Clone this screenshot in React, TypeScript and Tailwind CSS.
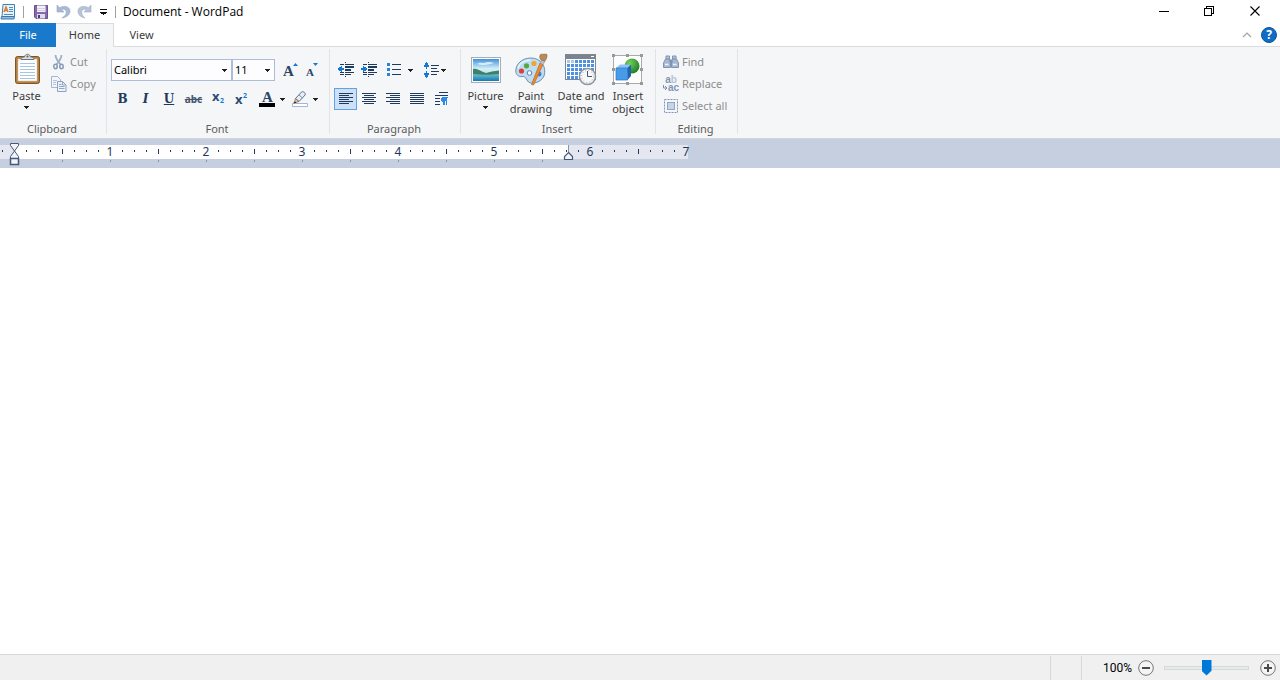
import React from 'react';

const Caret = () => (
  <svg width="5" height="3" viewBox="0 0 5 3" shapeRendering="crispEdges" className="shrink-0" aria-hidden="true">
    <path d="M0 0h5v1H0zM1 1h3v1H1zM2 2h1v1H2z" fill="#222" />
  </svg>
);

type IconProps = { children: React.ReactNode; size?: number; crisp?: boolean };

const Icon = ({ children, size = 16, crisp }: IconProps) => (
  <svg
    width={size}
    height={size}
    viewBox={`0 0 ${size} ${size}`}
    shapeRendering={crisp ? 'crispEdges' : 'auto'}
    className="shrink-0 overflow-visible"
    aria-hidden="true"
  >
    {children}
  </svg>
);

// rows of [x, y, width], one pixel thick
const Lines = ({ rows, fill = '#1f3a5f' }: { rows: number[][]; fill?: string }) => (
  <>
    {rows.map(([x, y, w]) => (
      <rect key={`${x}-${y}`} x={x} y={y} width={w} height="1" fill={fill} />
    ))}
  </>
);

const WordPadIcon = () => (
  <Icon>
    <path d="M3 .5h11.500v12H2z" fill="#e8f3fc" stroke="#3b82b8" />
    <path d="M1.500 12.500h13l-.6 2.500H1z" fill="#8fbfe4" stroke="#3b78aa" />
    <path d="M4 8 6 3l2 5M4.800 6.500h2.400" fill="none" stroke="#e07b28" strokeWidth="1.500" />
    <path d="M9 3.500h4M9 5.500h4M9 7.500h4M4 10.500h9" stroke="#4a90c8" />
  </Icon>
);

const SaveIcon = () => (
  <Icon>
    <path d="M1.500 1.500h13v13H3l-1.500-1.500z" fill="#8768b0" stroke="#67508e" />
    <path d="M4 1.500h8.500V8H4z" fill="#f3f2f8" />
    <path d="M4 4.500h8.500M4 6.500h8.500" stroke="#d3d0e2" />
    <path d="M4 10h8v4.500H4z" fill="#dedce8" />
    <path d="M5 11h2v3H5z" fill="#4d3d6e" />
  </Icon>
);

const UndoIcon = () => (
  <Icon>
    <path d="M2 1v7h7L6.600 5.600C9 4.600 11.300 5.500 11.300 8c0 2.500-1.500 4-4.300 6 5-.8 8-3.200 8-7 0-4.500-6-6-10.500-3.200z" fill="#a9b9d3" stroke="#93a5c3" strokeWidth=".6" />
  </Icon>
);

const RedoIcon = () => (
  <Icon>
    <path d="M14 1v7H7l2.400-2.400C7 4.600 4.700 5.500 4.700 8c0 2.500 1 4 3.300 6-4.500-.8-7-3.200-7-7 0-4.500 6-6 10.500-3.200z" fill="#b7c3d6" stroke="#9fadc5" strokeWidth=".6" />
  </Icon>
);

const PasteIcon = () => (
  <Icon size={32}>
    <rect x="4.500" y="3.500" width="24" height="27" rx="2" fill="#b5803f" stroke="#80551f" />
    <path d="M7 6h19v22H7z" fill="#fbfdff" stroke="#d7cbb8" strokeWidth=".6" />
    <path d="M9 10.500h15M9 13.500h15M9 16.500h15M9 19.500h15M9 22.500h15M9 25.500h15" stroke="#a9c5dc" />
    <path d="M10 6.500c0-2 1.500-2.500 3.500-2.500C14 2 15 1.300 16.500 1.300S19 2 19.500 4c2 0 3.500.5 3.500 2.500z" fill="#d9dce0" stroke="#6f747b" />
    <circle cx="16.500" cy="3.500" r="1" fill="#5b6067" />
  </Icon>
);

const CutIcon = () => (
  <Icon>
    <path d="M4.500 1c0 3 1.500 5.500 5.500 10M10.500 1c0 3-1.500 5.500-5.500 10" fill="none" stroke="#9fafc6" strokeWidth="1.800" />
    <ellipse cx="4.500" cy="12.500" rx="1.700" ry="2.200" fill="none" stroke="#8599b8" strokeWidth="1.500" />
    <ellipse cx="10.500" cy="12.500" rx="1.700" ry="2.200" fill="none" stroke="#8599b8" strokeWidth="1.500" />
  </Icon>
);

const CopyIcon = () => (
  <Icon>
    <path d="M.5.5h6l3 3v8h-9z" fill="#f2f6fc" stroke="#a5b6cf" />
    <path d="M2 4.500h4M2 6.500h3M2 8.500h3" stroke="#b3c4da" />
    <path d="M6.500 5.500h5l3.500 3.500v6.500H6.500z" fill="#eef3fa" stroke="#8da2c0" />
    <path d="M11.500 5.500V9H15M8 8.500h2.500M8 10.500h5.500M8 12.500h5.500" fill="none" stroke="#93a8c6" />
  </Icon>
);

const GrowFontIcon = () => (
  <Icon>
    <text x="0" y="14" fontFamily="Liberation Serif, serif" fontSize="15" fontWeight="bold" fill="#2b4567">A</text>
    <path d="M10 4 12.500 1 15 4z" fill="#1478d4" />
  </Icon>
);

const ShrinkFontIcon = () => (
  <Icon>
    <text x="1" y="14" fontFamily="Liberation Serif, serif" fontSize="11" fontWeight="bold" fill="#2b4567">A</text>
    <path d="M8 1h5l-2.500 3z" fill="#1478d4" />
  </Icon>
);

const SubscriptIcon = () => (
  <Icon>
    <text x="2" y="10" fontSize="13" fontWeight="bold" fill="#2b4b77">x</text>
    <text x="10" y="12" fontSize="7" fontWeight="bold" fill="#1478d4">2</text>
  </Icon>
);

const SuperscriptIcon = () => (
  <Icon>
    <text x="2" y="13" fontSize="13" fontWeight="bold" fill="#2b4b77">x</text>
    <text x="10" y="7" fontSize="7" fontWeight="bold" fill="#1478d4">2</text>
  </Icon>
);

const FontColorIcon = () => (
  <Icon>
    <text x="3" y="11" fontFamily="Liberation Serif, serif" fontSize="15" fontWeight="bold" fill="#2b4567">A</text>
    <path d="M0 12h16v4H0z" fill="#000" />
  </Icon>
);

const HighlightIcon = () => (
  <Icon>
    <path d="M.5 12.500h15v3H.5z" fill="#fff" stroke="#a3b6d2" />
    <path d="M3.500 7.500 9.500 1c1.500-1 4.500.8 3.600 3L7 10.500z" fill="#e7eefa" stroke="#5c7093" />
    <path d="m7 4 3.500 3" stroke="#8093b3" />
    <path d="M3.500 7.500 7 10.500 2 12z" fill="#e8c98a" stroke="#77643c" strokeWidth=".7" />
    <path d="m1 12.300 2.500-1.800.8 1.300z" fill="#222" />
  </Icon>
);

const textRows = [[7, 0, 1], [2, 2, 4], [7, 2, 9], [7, 4, 9], [7, 5, 9], [7, 7, 6], [7, 8, 6], [2, 10, 4], [7, 10, 9], [2, 12, 4], [7, 12, 6], [7, 14, 1]];

const DecreaseIndentIcon = () => (
  <Icon crisp>
    <Lines rows={textRows} />
    <path d="M0 6h6v2H0zM1 5h3v4H1zM3 4h1v6H3z" fill="#1478d4" />
  </Icon>
);

const IncreaseIndentIcon = () => (
  <Icon crisp>
    <Lines rows={textRows} />
    <path d="M0 6h6v2H0zM2 5h3v4H2zM2 4h1v6H2z" fill="#1478d4" />
  </Icon>
);

const BulletsIcon = () => (
  <Icon crisp>
    <Lines rows={[[6, 2, 9], [6, 7, 9], [6, 12, 9]]} />
    <path d="M1 1h3v3H1zM1 6h3v3H1zM1 11h3v3H1z" fill="#2a82da" />
  </Icon>
);

const LineSpacingIcon = () => (
  <Icon crisp>
    <Lines rows={[[8, 3, 8], [8, 6, 6], [8, 9, 8], [8, 12, 6]]} />
    <path d="M3 0h1v16H3zM2 1h3v2H2zM1 3h5v2H1zM1 11h5v2H1zM2 13h3v2H2z" fill="#1478d4" />
    <path d="M3 7h1v2H3z" fill="#f5f6f7" />
  </Icon>
);

const AlignLeftIcon = () => (
  <Icon crisp><Lines rows={[[1, 2, 14], [1, 4, 10], [1, 6, 14], [1, 8, 10], [1, 10, 14], [1, 12, 10]]} /></Icon>
);
const AlignCenterIcon = () => (
  <Icon crisp><Lines rows={[[1, 2, 14], [3, 4, 10], [1, 6, 14], [3, 8, 10], [1, 10, 14], [3, 12, 10]]} /></Icon>
);
const AlignRightIcon = () => (
  <Icon crisp><Lines rows={[[1, 2, 14], [5, 4, 10], [1, 6, 14], [5, 8, 10], [1, 10, 14], [5, 12, 10]]} /></Icon>
);
const JustifyIcon = () => (
  <Icon crisp><Lines rows={[[1, 2, 14], [1, 4, 14], [1, 6, 14], [1, 8, 14], [1, 10, 14], [1, 12, 14]]} /></Icon>
);

const ParagraphIcon = () => (
  <Icon crisp>
    <Lines rows={[[5, 1, 9], [1, 4, 13], [1, 7, 5], [1, 10, 5], [1, 13, 5]]} />
    <path d="M8 6h6v1H8zM7 7h5v3H7zM8 10h3v1H8zM9 7h2v7H9zM12 7h1v7h-1z" fill="#2a8ae6" />
  </Icon>
);

const PictureIcon = () => (
  <Icon size={32}>
    <defs>
      <linearGradient id="sky" x2="0" y2="1">
        <stop offset="0" stopColor="#3f93dc" />
        <stop offset=".45" stopColor="#d6f0f8" />
        <stop offset=".6" stopColor="#c4e6ee" />
      </linearGradient>
      <linearGradient id="lake" x2="0" y2="1">
        <stop offset="0" stopColor="#7cc8da" />
        <stop offset="1" stopColor="#1779ae" />
      </linearGradient>
    </defs>
    <rect x="1.500" y="4.500" width="29" height="25" fill="#fff" stroke="#a7adb3" />
    <path d="M3 6h26v22H3z" fill="url(#sky)" />
    <path d="M7 11c3-2 5-1 7-1 3-1 6-1.500 10 0-4 1.500-11 3-17 1z" fill="#fff" opacity=".7" />
    <path d="M3 20h26v8H3z" fill="url(#lake)" />
    <path d="M3 16c3-1 6 1 9 2.500l4 1.500 6-1.500 7-1v3.500c-8 1-18 1-26 0z" fill="#3d8264" />
  </Icon>
);

const PaintIcon = () => (
  <Icon size={32}>
    <path d="M16 5C7 5 .800 11 .800 18c0 4 3 6 6.200 5.500 4-.6 4 3 6.500 5.500 4 3 13 0 15.500-6C32 14 26 5 16 5z" fill="#bfdcf2" stroke="#6792b5" />
    <path d="M15.500 7C9 7 4 11 3 15" fill="none" stroke="#eaf5fd" strokeWidth="1.500" />
    <circle cx="6.500" cy="18" r="2.600" fill="#dc4038" />
    <circle cx="11.500" cy="12.800" r="2.600" fill="#53a93c" />
    <circle cx="19" cy="10.500" r="2.600" fill="#f1a52c" />
    <circle cx="14.500" cy="20" r="2.300" fill="#fff" stroke="#5583ab" />
    <circle cx="24" cy="21" r="2.500" fill="#4180cf" />
    <path d="M16.500 31.500 25 10l3 1.500-9.500 20.500z" fill="#ee8b2d" stroke="#ba621b" strokeWidth=".7" />
    <path d="m25 10 1.500-3.500 3.800 1.500L28 11.500z" fill="#b9c0c8" stroke="#868d95" strokeWidth=".5" />
    <path d="M26 7c-2-2-1.500-5 0-6 1.500.8 4-.5 6 .5.5 2-.5 5-2.300 6.700z" fill="#b88a59" stroke="#8b623a" strokeWidth=".5" />
  </Icon>
);

const days = [0, 1, 2, 3, 4, 5, 6];
const weeks = [0, 1, 2, 3, 4];

const DateIcon = () => (
  <Icon size={32}>
    <rect x=".5" y="1.500" width="30" height="25" fill="#fff" stroke="#7f868e" />
    <path d="M1 2h29v4H1z" fill="#7a838e" />
    <path d="M26 3.500h3" stroke="#fff" />
    {weeks.map(w => days.map(d => (
      <rect key={`${w}-${d}`} x={2 + d * 4} y={7 + w * 4} width="3" height="3" fill={w < 1 && d < 2 ? '#a9cbf0' : '#4f90e0'} />
    )))}
    <circle cx="22.500" cy="23.500" r="8" fill="#f5f7f9" stroke="#8d949b" strokeWidth="1.500" />
    <circle cx="22.500" cy="23.500" r="6" fill="none" stroke="#a5acb3" strokeDasharray="1 2.140" />
    <path d="M22.500 18v5.500H27" fill="none" stroke="#475867" />
  </Icon>
);

const ObjectIcon = () => (
  <Icon size={32}>
    <defs>
      <radialGradient id="ball" cx=".35" cy=".3" r=".8">
        <stop offset="0" stopColor="#76cf5c" />
        <stop offset="1" stopColor="#137a1d" />
      </radialGradient>
    </defs>
    <rect x="1.500" y="2.500" width="28" height="28" fill="#fdfdfe" stroke="#aaa" />
    <path d="M0 1h3v3H0zM14 1h3v3h-3zM28 1h3v3h-3zM0 15h3v3H0zM28 15h3v3h-3zM0 29h3v3H0zM14 29h3v3h-3zM28 29h3v3h-3z" fill="#999" />
    <circle cx="20" cy="13" r="7.500" fill="url(#ball)" />
    <path d="m4 15 4-3.500h11L15.500 15z" fill="#8bc2f7" />
    <path d="M15.500 15 19 11.500v11.500l-3.500 4z" fill="#2364b0" />
    <path d="M4 15h11.500v12H4z" fill="#479be9" stroke="#2c76c4" strokeWidth=".7" />
  </Icon>
);

const FindIcon = () => (
  <Icon>
    <path d="M3 2h3.500v3H3zM9.500 2H13v3H9.500z" fill="#b6c4d8" stroke="#7f94b4" />
    <path d="M2.500 5H7l.5 4v4.500h-7V9zM9 5h4.500l2 4v4.500h-7V9z" fill="#a7b8d0" stroke="#7f94b4" />
    <path d="M6.500 6h3v3h-3z" fill="#7f94b4" />
    <path d="M2 10.500h3.500M10 10.500h3.500" stroke="#eef3fa" strokeWidth="1.500" />
  </Icon>
);

const ReplaceIcon = () => (
  <span className="relative flex h-4 w-4 shrink-0 flex-col justify-between font-['Liberation_Sans',sans-serif] text-[10px] font-bold leading-2 text-[#8195b6]">
    <span>a<span className="text-[#b8c2d1]">b</span></span>
    <span className="text-right">ac</span>
    <svg width="5" height="6" className="absolute bottom-px left-0" aria-hidden="true">
      <path d="M.5 0v3H4M2 1l2 2-2 2" fill="none" stroke="#7c90b2" />
    </svg>
  </span>
);

const SelectAllIcon = () => (
  <Icon>
    <rect x="1.500" y="1.500" width="13" height="13" fill="none" stroke="#7f95b8" strokeDasharray="2 1" />
    <rect x="4.500" y="4.500" width="7" height="7" fill="#c6d4e8" stroke="#94a8c6" />
  </Icon>
);

type GroupProps = { label: string; className: string; children: React.ReactNode };

const Group = ({ label, className, children }: GroupProps) => (
  <section aria-label={label} className={`flex flex-col shrink-0 ${className}`}>
    <div className="flex h-[68px]">{children}</div>
    <div className="h-[19px] pr-0.5 text-center leading-5 text-[#5c5c5c]">{label}</div>
  </section>
);

const Divider = () => <div className="-mt-0.5 mb-1 w-px shrink-0 bg-[#e1e3e6]" />;

type BigProps = { icon: React.ReactNode; lines: string[]; menu?: boolean; className: string };

const BigButton = ({ icon, lines, menu, className }: BigProps) => (
  <button className={`flex flex-col items-center pt-0.5 leading-[13px] text-[#3b3b3b] ${className}`}>
    {icon}
    <span className="mt-1 whitespace-nowrap">
      {lines.map(line => <span key={line} className="block">{line}</span>)}
    </span>
    {menu && <span className="mt-1"><Caret /></span>}
  </button>
);

const SmallButton = ({ icon, label }: { icon: React.ReactNode; label: string }) => (
  <button disabled className="flex h-[22px] items-center gap-[3px] whitespace-nowrap text-[#8d8d8d]">
    {icon}
    {label}
  </button>
);

type ToolProps = { label: string; className?: string; children: React.ReactNode };

const Tool = ({ label, className = 'w-[23px]', children }: ToolProps) => (
  <button aria-label={label} className={`flex h-[22px] shrink-0 items-center justify-center ${className}`}>
    {children}
  </button>
);

const Combo = ({ label, options, className }: { label: string; options: string[]; className: string }) => (
  <label className={`grid h-[22px] items-center border border-[#abbdd8] bg-[#fdfdff] ${className}`}>
    <select aria-label={label} className="col-start-1 row-start-1 h-5 w-full appearance-none pl-0.5 text-black outline-none">
      {options.map(o => <option key={o}>{o}</option>)}
    </select>
    <span className="pointer-events-none col-start-1 row-start-1 justify-self-end pr-1"><Caret /></span>
  </label>
);

const INCH = 96;
const ORIGIN = 14;

const Ruler = () => {
  const ticks = Array.from({ length: 57 }, (_, i) => i - 1).filter(i => i !== 0 && i % 8 !== 0);
  return (
    <div className="bg-[#c6cfe0]">
      <svg width="700" height="29" viewBox="0 0 700 29" className="block" role="img" aria-label="Ruler">
        <g shapeRendering="crispEdges">
          <path d="M0 6h688v14H0z" fill="#e4e7ef" />
          <path d="M14 6h554v14H14z" fill="#fff" />
          {ticks.map(i => (
            <rect key={i} x={ORIGIN + i * 12} y={i % 4 ? 11 : 10} width="1" height={i % 4 ? 2 : 5} fill="#1f3a5f" />
          ))}
          {Array.from({ length: 11 }, (_, i) => (
            <rect key={i} x={ORIGIN + (i + 1) * 48} y="21" width="1" height="2" fill="#8594ab" />
          ))}
          <path d="M568 6h1v8h-1z" fill="#8594ab" />
        </g>
        {[1, 2, 3, 4, 5, 6, 7].map(n => (
          <text key={n} x={ORIGIN + n * INCH} y="17" textAnchor="middle" fontSize="12" fill="#1f3a5f">{n}</text>
        ))}
        <path d="M10.500 4.500h8v2L14.500 12l-4-5.500z" fill="#f2f4f8" stroke="#44587a" />
        <path d="m14.500 12 4 5.500v2h-8v-2z" fill="#f2f4f8" stroke="#44587a" />
        <path d="M10.500 19.500h8v6h-8z" fill="#f2f4f8" stroke="#44587a" strokeWidth="1.500" />
        <path d="m568.500 13.500 4 4v3h-8v-3z" fill="#f2f4f8" stroke="#44587a" strokeWidth="1.200" />
      </svg>
    </div>
  );
};

const TitleBar = () => (
  <header className="flex h-[23px] items-center">
    <WordPadIcon />
    <span className="ml-[7px] h-3 w-px bg-[#a0a0a0]" />
    <div className="ml-[9px] flex items-center gap-1.5">
      <button aria-label="Save"><SaveIcon /></button>
      <button aria-label="Undo"><UndoIcon /></button>
      <button aria-label="Redo"><RedoIcon /></button>
      <button aria-label="Customize Quick Access Toolbar" className="ml-px">
        <svg width="7" height="6" viewBox="0 0 7 6" shapeRendering="crispEdges">
          <path d="M0 0h7v1H0zM0 3h7v1H0zM1 4h5v1H1zM3 5h1v1H3z" fill="#111" />
        </svg>
      </button>
    </div>
    <span className="ml-2 h-3 w-px bg-[#a0a0a0]" />
    <h1 className="ml-[7px] font-['Open_Sans',sans-serif] text-[12px] leading-5 text-black">Document - WordPad</h1>
    <div className="ml-auto flex h-5 pr-0.5">
      <button aria-label="Minimize" className="flex w-[46px] items-center justify-center">
        <svg width="11" height="11" shapeRendering="crispEdges"><path d="M0 5h10v1H0z" /></svg>
      </button>
      <button aria-label="Restore" className="flex w-[45px] items-center justify-center">
        <svg width="11" height="11" shapeRendering="crispEdges">
          <path d="M.5 2.500h7v7h-7zM2.500 2.500v-2h7v7h-2" fill="none" stroke="#000" />
        </svg>
      </button>
      <button aria-label="Close" className="flex w-[46px] items-center justify-center">
        <svg width="11" height="11"><path d="m.5.5 9 9M9.500.5l-9 9" stroke="#000" strokeWidth="1.100" /></svg>
      </button>
    </div>
  </header>
);

const Tabs = () => (
  <nav className="flex h-6 text-[#3b3b3b]">
    <button className="w-14 bg-[#1979ca] text-white">File</button>
    <button className="w-[58px] border-t border-r border-[#dadbdc] bg-[#f5f6f7]">Home</button>
    <div className="flex flex-1 items-stretch border-b border-[#dadbdc] pt-px">
      <button className="w-[55px]">View</button>
      <button aria-label="Minimize the Ribbon" className="ml-auto">
        <svg width="10" height="6"><path d="m1 5 4-4 4 4" fill="none" stroke="#a3a3a3" strokeWidth="1.200" /></svg>
      </button>
      <button aria-label="Help" className="ml-[9px] mr-[3px]">
        <svg width="16" height="16">
          <circle cx="8" cy="8" r="7.500" fill="#0f6cc4" stroke="#0a569f" />
          <text x="8" y="12" textAnchor="middle" fontSize="12" fontWeight="bold" fill="#fff">?</text>
        </svg>
      </button>
    </div>
  </nav>
);

const glyph = "font-['DejaVu_Serif',serif] text-[12px] font-bold leading-4 text-[#1f3a5f]";

const Ribbon = () => (
  <div className="flex overflow-hidden border-b border-[#d2d6dc] bg-[#f5f6f7] pt-1">
    <Group label="Clipboard" className="w-[106px]">
      <BigButton icon={<PasteIcon />} lines={['Paste']} menu className="ml-1 w-[45px]" />
      <div className="ml-0.5">
        <SmallButton icon={<CutIcon />} label="Cut" />
        <SmallButton icon={<CopyIcon />} label="Copy" />
      </div>
    </Group>
    <Divider />
    <Group label="Font" className="w-[222px]">
      <div className="flex flex-col gap-[7px] pt-2 pl-1">
        <div className="flex">
          <Combo label="Font family" options={['Calibri', 'Arial', 'Segoe UI']} className="w-[121px]" />
          <Combo label="Font size" options={['11', '12', '14', '16']} className="w-[43px]" />
          <Tool label="Grow font" className="ml-1 w-6"><GrowFontIcon /></Tool>
          <Tool label="Shrink font" className="w-5"><ShrinkFontIcon /></Tool>
        </div>
        <div className="flex">
          <Tool label="Bold"><b className={glyph}>B</b></Tool>
          <Tool label="Italic"><i className={glyph}>I</i></Tool>
          <Tool label="Underline" className="w-6"><u className={glyph}>U</u></Tool>
          <Tool label="Strikethrough" className="w-[25px]"><s className="text-[10px] font-bold leading-4 text-[#44566f]">abc</s></Tool>
          <Tool label="Subscript"><SubscriptIcon /></Tool>
          <Tool label="Superscript"><SuperscriptIcon /></Tool>
          <Tool label="Text color" className="ml-[7px] w-[26px] gap-[5px]"><FontColorIcon /><Caret /></Tool>
          <Tool label="Text highlight color" className="ml-[7px] w-[26px] gap-[5px]"><HighlightIcon /><Caret /></Tool>
        </div>
      </div>
    </Group>
    <Divider />
    <Group label="Paragraph" className="w-[130px]">
      <div className="flex flex-col gap-[7px] pt-2 pl-1">
        <div className="flex">
          <Tool label="Decrease indent"><DecreaseIndentIcon /></Tool>
          <Tool label="Increase indent"><IncreaseIndentIcon /></Tool>
          <Tool label="Start a list" className="ml-1.5 gap-1.5"><BulletsIcon /><Caret /></Tool>
          <Tool label="Line spacing" className="ml-2.5 gap-0.5"><LineSpacingIcon /><Caret /></Tool>
        </div>
        <div className="flex">
          <Tool label="Align text left" className="w-[23px] border border-[#62a2e4] bg-[#cce1f7]"><AlignLeftIcon /></Tool>
          <Tool label="Center"><AlignCenterIcon /></Tool>
          <Tool label="Align text right" className="w-[25px]"><AlignRightIcon /></Tool>
          <Tool label="Justify"><JustifyIcon /></Tool>
          <Tool label="Paragraph" className="ml-0.5 w-[23px]"><ParagraphIcon /></Tool>
        </div>
      </div>
    </Group>
    <Divider />
    <Group label="Insert" className="w-[194px]">
      <BigButton icon={<PictureIcon />} lines={['Picture']} menu className="ml-0.5 w-[45px]" />
      <BigButton icon={<PaintIcon />} lines={['Paint', 'drawing']} className="w-[46px]" />
      <BigButton icon={<DateIcon />} lines={['Date and', 'time']} className="w-[54px]" />
      <BigButton icon={<ObjectIcon />} lines={['Insert', 'object']} className="w-10" />
    </Group>
    <Divider />
    <Group label="Editing" className="w-[81px]">
      <div className="pl-[7px]">
        <SmallButton icon={<FindIcon />} label="Find" />
        <SmallButton icon={<ReplaceIcon />} label="Replace" />
        <SmallButton icon={<SelectAllIcon />} label="Select all" />
      </div>
    </Group>
    <Divider />
  </div>
);

const ZoomIcon = ({ plus }: { plus?: boolean }) => (
  <Icon>
    <circle cx="8" cy="8" r="7.300" fill="#f4f4f4" stroke="#777" />
    <path d="M4 7h8v2H4z" fill="#4a4a4a" />
    {plus && <path d="M7 4h2v8H7z" fill="#4a4a4a" />}
  </Icon>
);

const StatusBar = () => (
  <footer className="flex h-[26px] items-center justify-end border-t border-[#d7d7d7] bg-[#f0f0f0] pr-1">
    <span className="h-6 w-[31px] border-l border-[#d7d7d7]" />
    <span className="h-6 w-[21px] border-l border-[#d7d7d7]" />
    <output htmlFor="zoom" className="w-[36px] pl-px text-[12px] text-black font-['Roboto',sans-serif]">100%</output>
    <button aria-label="Zoom out"><ZoomIcon /></button>
    <input
      id="zoom"
      type="range"
      aria-label="Zoom"
      defaultValue="50"
      className="mr-[11px] ml-2.5 h-4 w-[85px] appearance-none bg-transparent [&::-webkit-slider-runnable-track]:h-1 [&::-webkit-slider-runnable-track]:border [&::-webkit-slider-runnable-track]:border-[#d6d9d9] [&::-webkit-slider-runnable-track]:bg-[#e7eaea] [&::-webkit-slider-thumb]:-mt-[7px] [&::-webkit-slider-thumb]:h-4 [&::-webkit-slider-thumb]:w-2.5 [&::-webkit-slider-thumb]:appearance-none [&::-webkit-slider-thumb]:bg-[#0078d7] [&::-webkit-slider-thumb]:[clip-path:polygon(0_0,100%_0,100%_70%,50%_100%,0_70%)]"
    />
    <button aria-label="Zoom in"><ZoomIcon plus /></button>
  </footer>
);

export default function App() {
  return (
    <div className="flex min-h-screen flex-col bg-white font-['Noto_Sans',sans-serif] text-[11px]">
      <TitleBar />
      <Tabs />
      <Ribbon />
      <Ruler />
      <textarea aria-label="Document" className="w-full flex-1 resize-none outline-none" />
      <StatusBar />
    </div>
  );
}
